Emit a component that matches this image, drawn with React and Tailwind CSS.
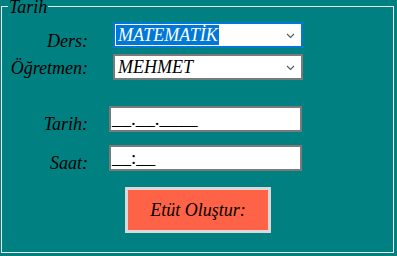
import React from "react";

const serif = "font-['Liberation_Serif',serif] italic";

function Chevron() {
  return (
    <svg width="9" height="6" viewBox="0 0 9 6" className="absolute right-[6px] top-[12px] -translate-y-1/2">
      <path d="M1 1 L4.5 4.5 L8 1" fill="none" stroke="#555" strokeWidth="1.1" />
    </svg>
  );
}

export default function App() {
  return (
    <div className={`w-[397px] h-[256px] bg-[#008080] overflow-hidden ${serif}`}>
      <fieldset className="ml-px mt-[-1px] w-[393px] h-[254px] border border-[#e8e8e8] p-0 m-0 min-w-0">
        <legend className="ml-[6px] px-[1px] pt-[2px] text-[18px] leading-[12px] text-black">Tarih</legend>
        <div className="flex flex-col pt-[9px]">
          <div className="flex items-start h-[26px]">
            <div className="w-[86px] pt-[6px] text-right text-[18px] leading-[26px] text-black">Ders:</div>
            <div className="relative ml-[25px] w-[190px] h-[26px] border-2 border-[#0078d7] bg-white flex items-center pl-px">
              <span className="bg-[#0078d7] text-white text-[18px] leading-[20px] pl-[2px] pr-px">MATEMATİK</span>
              <Chevron />
            </div>
          </div>
          <div className="flex items-start h-[26px] mt-[6px]">
            <div className="w-[86px] pt-[1px] text-right text-[18px] leading-[26px] text-black">Öğretmen:</div>
            <div className="relative ml-[25px] w-[190px] h-[26px] border-2 border-[#7a7a7a] bg-white flex items-center pl-[3px]">
              <span className="text-black text-[18px] leading-[20px]">MEHMET</span>
              <Chevron />
            </div>
          </div>
          <div className="flex items-start h-[26px] mt-[26px]">
            <div className="w-[86px] pt-[5px] text-right text-[18px] leading-[26px] text-black">Tarih:</div>
            <div className="ml-[21px] w-[193px] h-[26px] border-2 border-[#7a7a7a] bg-white flex items-center pl-px">
              <span className="text-black text-[19px] leading-[20px] not-italic">__.__.____</span>
            </div>
          </div>
          <div className="flex items-start h-[26px] mt-[13px]">
            <div className="w-[86px] pt-[5px] text-right text-[18px] leading-[26px] text-black">Saat:</div>
            <div className="ml-[21px] w-[193px] h-[26px] border-2 border-[#7a7a7a] bg-white flex items-center pl-px">
              <span className="text-black text-[19px] leading-[20px] not-italic">__:__</span>
            </div>
          </div>
          <div className="flex mt-[16px]">
            <div className="ml-[123px] w-[146px] h-[46px] border-[3px] border-[#d9d9d9] bg-[#ff6347] flex items-center justify-center text-[18px] text-black">
              Etüt Oluştur:
            </div>
          </div>
        </div>
      </fieldset>
    </div>
  );
}
